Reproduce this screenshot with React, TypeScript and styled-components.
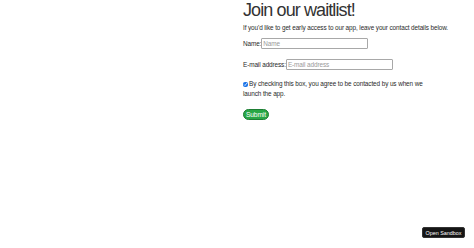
import styled, { createGlobalStyle } from 'styled-components'

const GlobalStyle = createGlobalStyle`
  html, body {
    margin: 0;
    padding: 0;
    background: #ffffff;
  }
  body {
    font-family: "Liberation Sans", Arial, sans-serif;
    color: #2a2a2a;
  }
`

const Page = styled.div`
  width: 474px;
  height: 248px;
  display: grid;
  grid-template-columns: 237px 237px;
  position: relative;
  overflow: hidden;
`

const Side = styled.div``

const Content = styled.div`
  padding-left: 6px;
  display: flex;
  flex-direction: column;
  font-size: 6.4px;
  letter-spacing: -0.1px;
`

const Heading = styled.h1`
  margin: 0;
  font-size: 18px;
  font-weight: 400;
  line-height: 20px;
  letter-spacing: -0.9px;
  color: #333333;
`

const Intro = styled.p`
  margin: 3px 0 0;
  line-height: 9px;
`

const Field = styled.label<{ $gap: number }>`
  display: flex;
  align-items: center;
  margin-top: ${p => p.$gap}px;
  line-height: 9px;
`

const TextInput = styled.input`
  width: 107px;
  height: 11px;
  box-sizing: border-box;
  margin: 0;
  padding: 0 1px;
  border: 1px solid #a8a8a8;
  border-radius: 1px;
  font-family: inherit;
  font-size: 6.4px;
  letter-spacing: -0.1px;
  color: #2a2a2a;
  &::placeholder {
    color: #9a9a9a;
  }
`

const Consent = styled.label`
  display: block;
  margin-top: 9px;
  width: 190px;
  line-height: 10px;
`

const Check = styled.input`
  width: 5px;
  height: 5px;
  margin: 0 1px 0 0;
  vertical-align: -0.5px;
  accent-color: #1a73e8;
`

const SubmitButton = styled.button`
  align-self: flex-start;
  margin-top: 10px;
  height: 11px;
  padding: 0 2px;
  border: 1px solid #1e7e34;
  border-radius: 6px;
  background: #28a745;
  color: #ffffff;
  font-family: inherit;
  font-size: 6.6px;
  letter-spacing: -0.1px;
  line-height: 9px;
`

const SandboxButton = styled.button`
  position: absolute;
  right: 9px;
  bottom: 10px;
  width: 43px;
  height: 11px;
  padding: 0;
  border: 1px solid #333;
  border-radius: 2px;
  background: #151515;
  color: #ffffff;
  font-family: inherit;
  font-size: 5.4px;
`

export default function App() {
  return (
    <>
      <GlobalStyle />
      <Page>
        <Side />
        <Content>
          <Heading>Join our waitlist!</Heading>
          <Intro>If you'd like to get early access to our app, leave your contact details below.</Intro>
          <Field $gap={6}>
            Name:<TextInput type="text" placeholder="Name" />
          </Field>
          <Field $gap={10}>
            E-mail address:<TextInput type="email" placeholder="E-mail address" />
          </Field>
          <Consent>
            <Check type="checkbox" defaultChecked />
            By checking this box, you agree to be contacted by us when we launch the app.
          </Consent>
          <SubmitButton type="submit">Submit</SubmitButton>
        </Content>
        <SandboxButton>Open Sandbox</SandboxButton>
      </Page>
    </>
  )
}
